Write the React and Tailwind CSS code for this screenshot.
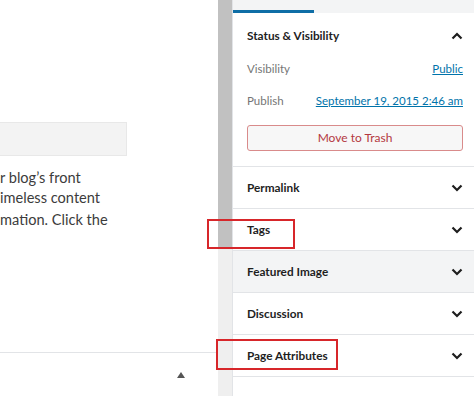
import React from 'react';

const Chevron = ({ up }) => (
  <svg width="12" height="8" viewBox="0 0 12 8" className="shrink-0">
    <polyline
      points={up ? '1.5,6.5 6,2 10.5,6.5' : '1.5,1.5 6,6 10.5,1.5'}
      fill="none"
      stroke="#1e1e1e"
      strokeWidth="2.2"
    />
  </svg>
);

const Panel = ({ title, gray }) => (
  <div className={`h-[42px] flex items-center justify-between pl-[14px] pr-[11px] border-b border-[#e2e4e7] ${gray ? 'bg-[#f3f4f5]' : 'bg-white'}`}>
    <span className="text-[11.8px] font-bold text-[#1e1e1e]">{title}</span>
    <Chevron />
  </div>
);

const App = () => {
  return (
    <div className="relative w-[474px] h-[396px] overflow-hidden bg-white flex" style={{ fontFamily: 'Lato, "Noto Sans", sans-serif' }}>

      {/* Editor area */}
      <div className="w-[218px] flex flex-col">
        <div className="pt-[122px]">
          <div className="w-[127px] h-[34px] bg-[#f3f3f3] border border-l-0 border-[#e8e8e8]" />
        </div>
        <div className="mt-[11px] text-[14.6px] leading-[21px] text-[#3c3c3c] whitespace-nowrap">
          <p>r blog’s front</p>
          <p className="-mt-[1px]">imeless content</p>
          <p className="mt-[1px]">mation. Click the</p>
        </div>
        <div className="flex-1" />
        <div className="h-[44px] border-t border-[#e2e4e7] flex items-center justify-end pr-[33px]">
          <span className="w-0 h-0 border-l-[4px] border-r-[4px] border-b-[6px] border-l-transparent border-r-transparent border-b-[#555]" />
        </div>
      </div>

      {/* Scrollbar */}
      <div className="w-[14px] flex flex-col">
        <div className="h-[248px] bg-[#c1c1c1]" />
        <div className="flex-1 bg-[#efefef]" />
      </div>

      {/* Sidebar */}
      <div className="flex-1 border-l border-[#e2e4e7] flex flex-col">
        <div className="h-[13px] bg-[#f3f4f5] flex items-end">
          <div className="w-[81px] h-[3px] bg-[#0f6ea6]" />
        </div>

        <div className="border-b border-[#e2e4e7] pl-[14px] pr-[11px] pb-[15px]">
          <div className="h-[40px] pt-[5px] flex items-center justify-between">
            <span className="text-[11.8px] font-bold text-[#1e1e1e]">Status &amp; Visibility</span>
            <Chevron up />
          </div>
          <div className="h-[32px] flex items-center justify-between text-[11.5px]">
            <span className="text-[#757575]">Visibility</span>
            <span className="text-[#0073aa] underline">Public</span>
          </div>
          <div className="h-[32px] flex items-center justify-between text-[11.5px]">
            <span className="text-[#757575]">Publish</span>
            <span className="text-[#0073aa] underline">September 19, 2015 2:46 am</span>
          </div>
          <div className="mt-[8px] h-[26px] border border-[#d98b8b] rounded-[3px] bg-[#f7f7f7] flex items-center justify-center text-[12px] text-[#b4383f]">
            Move to Trash
          </div>
        </div>

        <Panel title="Permalink" />
        <Panel title="Tags" />
        <Panel title="Featured Image" gray />
        <Panel title="Discussion" />
        <Panel title="Page Attributes" />
      </div>

      {/* Annotation boxes */}
      <div className="absolute left-[207px] top-[219px] w-[88px] h-[30px] border-2 border-[#d7262a]" />
      <div className="absolute left-[216px] top-[339px] w-[122px] h-[31px] border-2 border-[#d7262a]" />
    </div>
  );
};

export default App;
